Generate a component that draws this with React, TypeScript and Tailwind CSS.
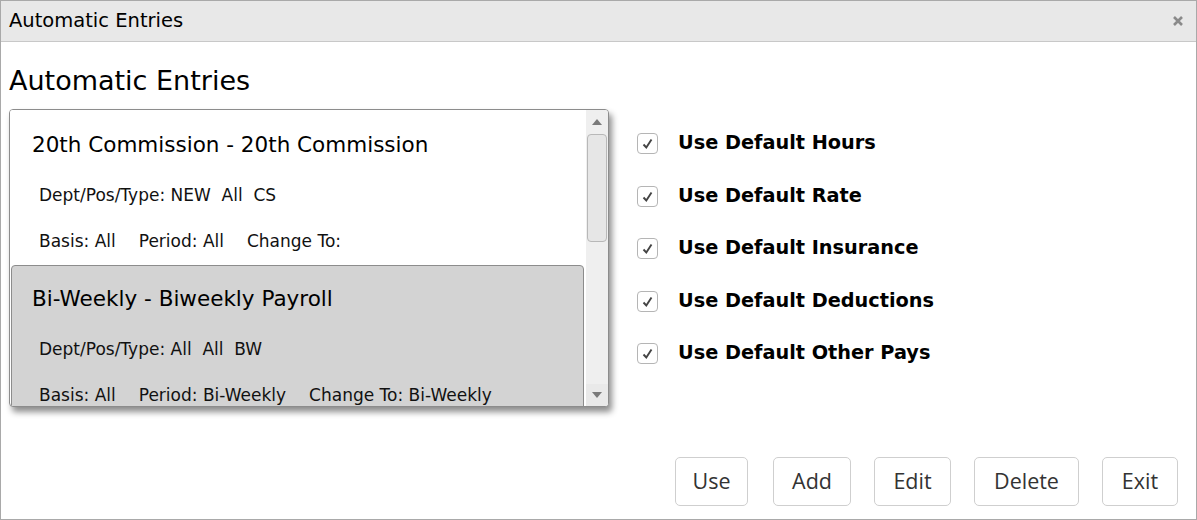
import React from "react";

const entries = [
  {
    title: "20th Commission - 20th Commission",
    dept: "Dept/Pos/Type: NEW\u00a0\u00a0All\u00a0\u00a0CS",
    basis: "All",
    period: "All",
    change: "",
    selected: false,
  },
  {
    title: "Bi-Weekly - Biweekly Payroll",
    dept: "Dept/Pos/Type: All\u00a0\u00a0All\u00a0\u00a0BW",
    basis: "All",
    period: "Bi-Weekly",
    change: "Bi-Weekly",
    selected: true,
  },
];

const options = [
  "Use Default Hours",
  "Use Default Rate",
  "Use Default Insurance",
  "Use Default Deductions",
  "Use Default Other Pays",
];

const buttons = [
  { label: "Use", w: "w-[73px]" },
  { label: "Add", w: "w-[78px] ml-[2px]" },
  { label: "Edit", w: "w-[77px]" },
  { label: "Delete", w: "w-[105px]" },
  { label: "Exit", w: "w-[76px]" },
];

const Check = () => (
  <div className="w-[21px] h-[21px] rounded-[4px] border border-[#b5b5b5] bg-white flex items-center justify-center">
    <svg width="13" height="13" viewBox="0 0 13 13">
      <path d="M2.5 7.5 L5.3 10.5 L10.5 2.5" fill="none" stroke="#444" strokeWidth="1.9" />
    </svg>
  </div>
);

const App = () => {
  return (
    <div className="w-[1197px] h-[520px] border border-[#a9a9a9] bg-white flex flex-col overflow-hidden font-['DejaVu_Sans',sans-serif] text-black">
      <div className="h-[41px] shrink-0 bg-[#e8e8e8] border-b border-[#c8c8c8] flex items-center justify-between pl-2 pr-3">
        <span className="text-[19.5px]">Automatic Entries</span>
        <svg width="12" height="12" viewBox="0 0 12 12">
          <path d="M2 2 L10 10 M10 2 L2 10" stroke="#8a8a8a" strokeWidth="2.6" />
        </svg>
      </div>

      <div className="flex-1 flex flex-col px-2">
        <h1 className="text-[27px] leading-none mt-[25px] mb-[15px]">Automatic Entries</h1>

        <div className="flex">
          <div className="w-[600px] h-[298px] border border-[#8c8c8c] rounded-[4px] shadow-[3px_5px_6px_rgba(0,0,0,0.45)] overflow-hidden flex bg-white">
            <div className="flex-1 flex flex-col">
              {entries.map((e) => (
                <div
                  key={e.title}
                  className={
                    e.selected
                      ? "h-[155px] shrink-0 bg-[#d3d3d3] border border-[#8c8c8c] rounded-t-[4px] ml-[1px] mr-[2px]"
                      : "h-[155px] shrink-0 bg-white"
                  }
                >
                  <div className={e.selected ? "pl-[20px] pt-[19px]" : "pl-[22px] pt-[21px]"}>
                    <div className="text-[21.5px] leading-[28px]">{e.title}</div>
                    <div className="pl-[7px] mt-[26px] text-[17px] leading-[20px] text-[#111]">
                      {e.dept}
                    </div>
                    <div className="pl-[7px] mt-[26px] text-[17px] leading-[20px] text-[#111] flex gap-[23px]">
                      <span>Basis: {e.basis}</span>
                      <span>Period: {e.period}</span>
                      <span>Change To:{e.change ? " " + e.change : ""}</span>
                    </div>
                  </div>
                </div>
              ))}
            </div>
            <div className="w-[22px] shrink-0 bg-[#efefef] flex flex-col items-center">
              <div className="h-[24px] flex items-center justify-center">
                <svg width="10" height="6" viewBox="0 0 10 6">
                  <path d="M0 6 L5 0 L10 6 Z" fill="#7a7a7a" />
                </svg>
              </div>
              <div className="w-[20px] h-[108px] rounded-[4px] border border-[#b8b8b8] bg-[#e6e6e6]" />
              <div className="flex-1" />
              <div className="h-[22px] w-full bg-[#e9e9e9] flex items-center justify-center">
                <svg width="10" height="6" viewBox="0 0 10 6">
                  <path d="M0 0 L10 0 L5 6 Z" fill="#7a7a7a" />
                </svg>
              </div>
            </div>
          </div>

          <div className="ml-[28px] flex flex-col gap-[31.5px] pt-[24px]">
            {options.map((o) => (
              <div key={o} className="flex items-center h-[21px]">
                <Check />
                <span className="ml-[20px] text-[19.3px] font-bold">{o}</span>
              </div>
            ))}
          </div>
        </div>

        <div className="flex justify-end gap-[23px] mt-[50px] pr-[10px]">
          {buttons.map((b) => (
            <button
              key={b.label}
              className={`${b.w} h-[49px] border border-[#cfcfcf] rounded-[5px] bg-white text-[21.5px] text-[#333] font-['Open_Sans',sans-serif]`}
            >
              {b.label}
            </button>
          ))}
        </div>
      </div>
    </div>
  );
};

export default App;
